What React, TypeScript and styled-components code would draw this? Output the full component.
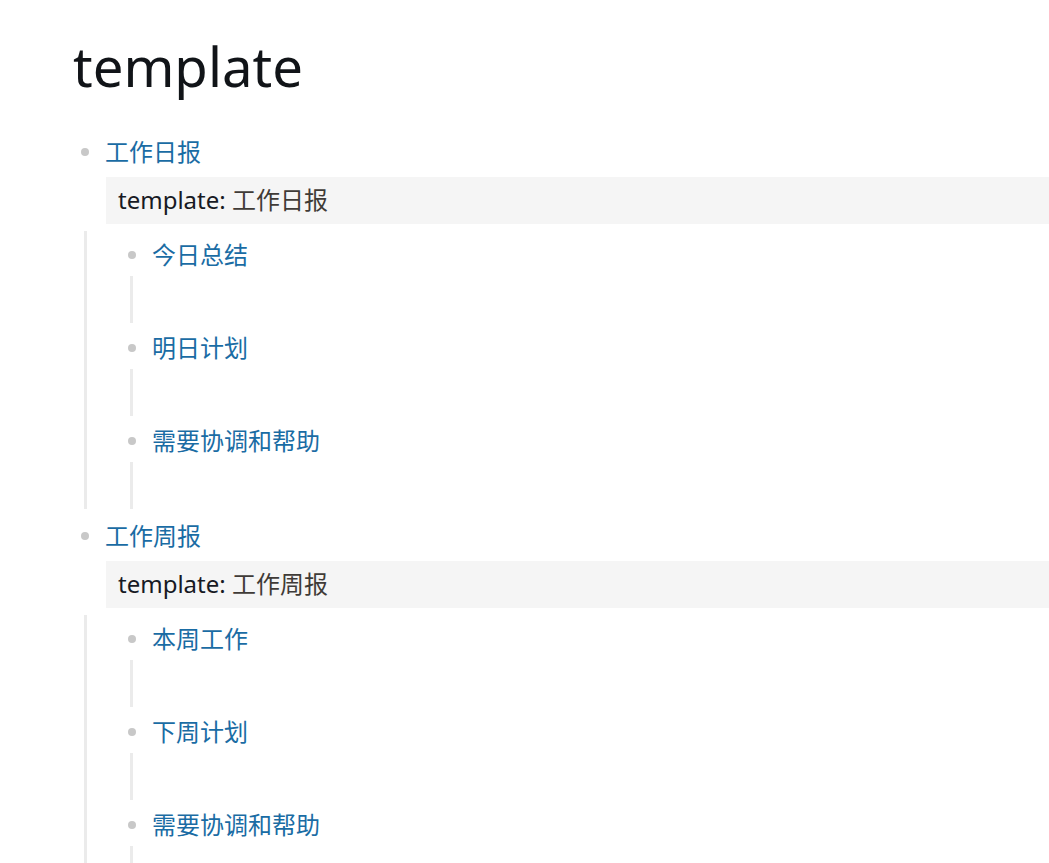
import { FC } from 'react'
import styled, { createGlobalStyle } from 'styled-components'

interface Section {
   title: string
   template: string
   children: string[]
}

const sections: Section[] = [
   { title: '工作日报', template: '工作日报', children: ['今日总结', '明日计划', '需要协调和帮助'] },
   { title: '工作周报', template: '工作周报', children: ['本周工作', '下周计划', '需要协调和帮助'] },
]

const App: FC = () => (
   <Page>
      <GlobalStyle />
      <Title>template</Title>
      <Outline>
         {sections.map(section => (
            <TopItem key={section.title}>
               <Row>
                  <Bullet>
                     <Dot />
                  </Bullet>
                  <Label>{section.title}</Label>
               </Row>
               <Property>
                  template: <PropertyValue>{section.template}</PropertyValue>
               </Property>
               <Children>
                  {section.children.map(child => (
                     <ChildItem key={child}>
                        <Row>
                           <Bullet>
                              <Dot />
                           </Bullet>
                           <Label>{child}</Label>
                        </Row>
                        <EmptyChildren />
                     </ChildItem>
                  ))}
               </Children>
            </TopItem>
         ))}
      </Outline>
   </Page>
)

const GlobalStyle = createGlobalStyle`
   html, body {
      margin: 0;
      padding: 0;
      background: #ffffff;
      overflow: hidden;
   }
   body {
      font-family: "Noto Sans", "Noto Sans CJK SC", sans-serif;
   }
`

const Page = styled.main`
   padding-left: 73px;
   min-height: 863px;
   overflow: hidden;
`

const Title = styled.h1`
   margin: 34px 0 35px;
   font-family: 'Noto Sans', 'Noto Sans CJK SC', sans-serif;
   font-size: 54.5px;
   font-weight: 400;
   line-height: 65px;
   color: #111418;
`

const Outline = styled.div`
   display: flex;
   flex-direction: column;
`

const TopItem = styled.section`
   display: flex;
   flex-direction: column;
   margin-bottom: 9px;
`

const ChildItem = styled.div`
   display: flex;
   flex-direction: column;
   margin-bottom: 7px;

   &:last-child {
      margin-bottom: 0;
   }
`

const Row = styled.div`
   display: flex;
   align-items: center;
   height: 36px;
`

const Bullet = styled.span`
   display: flex;
   align-items: center;
   justify-content: center;
   width: 24px;
   height: 36px;
   flex-shrink: 0;
`

const Dot = styled.span`
   width: 8px;
   height: 8px;
   border-radius: 50%;
   background: #c8c8c8;
`

const Label = styled.a`
   padding: 0 0 3px 8px;
   font-family: 'Noto Sans CJK SC', sans-serif;
   font-size: 24px;
   line-height: 32px;
   color: #1a6ca4;
   cursor: pointer;
`

const Property = styled.div`
   margin: 7px 0 0 33px;
   height: 44px;
   padding: 0 0 3px 12px;
   background: #f5f5f5;
   font-family: 'Noto Sans', 'Noto Sans CJK SC', sans-serif;
   font-size: 24px;
   line-height: 44px;
   color: #171a24;
   white-space: nowrap;
`

const PropertyValue = styled.span`
   font-family: 'Noto Sans CJK SC', sans-serif;
   color: #3f3b37;
`

const Children = styled.div`
   display: flex;
   flex-direction: column;
   margin: 7px 0 0 11px;
   padding: 6px 0 0 33px;
   border-left: 3px solid #ebebeb;
`

const EmptyChildren = styled.div`
   margin: 3px 0 0 10px;
   height: 47px;
   border-left: 3px solid #ebebeb;
`

export default App
